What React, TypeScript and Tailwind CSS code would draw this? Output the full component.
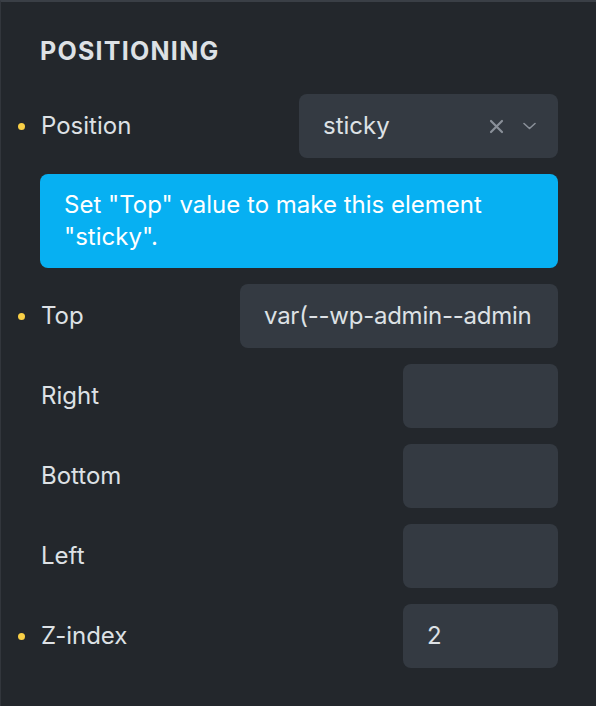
import React from "react";

const font = { fontFamily: "Inter, 'Noto Sans', sans-serif" };

function Dot({ on }: { on?: boolean }) {
  return (
    <span className="w-[20px] flex items-center">
      {on ? <span className="block w-[7px] h-[7px] rounded-full bg-[#f8cf46] -ml-[3px]" /> : null}
    </span>
  );
}

function Row({
  label,
  dot,
  children,
}: {
  label: string;
  dot?: boolean;
  children: React.ReactNode;
}) {
  return (
    <div className="flex items-center h-[64px] pl-[20px]">
      <Dot on={dot} />
      <span className="text-[24px] text-[#dde1e5] flex-1">{label}</span>
      {children}
    </div>
  );
}

function Box({ w, value }: { w: string; value?: string }) {
  return (
    <div
      className={`${w} h-[64px] rounded-[8px] bg-[#343a42] flex items-center pl-[24px] pr-[18px] text-[24px] tracking-[-0.01em] text-[#dde1e5] overflow-hidden`}
    >
      <span className="block whitespace-nowrap">{value}</span>
    </div>
  );
}

export default function App() {
  return (
    <div
      style={font}
      className="w-[596px] h-[706px] bg-[#23272c] border-t-[2px] border-t-[#3a3f46] border-l border-l-[#32363c] pr-[38px] pt-[34px]"
    >
      <h2 className="pl-[39px] text-[25px] font-bold tracking-[0.05em] text-[#dde1e5] leading-[30px]">
        POSITIONING
      </h2>
      <div className="mt-[28px] flex flex-col gap-[16px]">
        <Row label="Position" dot>
          <div className="w-[259px] h-[64px] rounded-[8px] bg-[#343a42] flex items-center pl-[24px] pr-[22px] text-[24px] text-[#dde1e5]">
            <span className="flex-1">sticky</span>
            <svg width="15" height="15" viewBox="0 0 15 15" className="mr-[19px]">
              <path d="M2 2L13 13M13 2L2 13" stroke="#8a9099" strokeWidth="2.2" strokeLinecap="round" />
            </svg>
            <svg width="13" height="8" viewBox="0 0 13 8">
              <path d="M1 1.5L6.5 6.5L12 1.5" stroke="#8a9099" strokeWidth="1.6" fill="none" strokeLinecap="round" strokeLinejoin="round" />
            </svg>
          </div>
        </Row>
        <div className="ml-[39px] rounded-[8px] bg-[#07b0f2] text-white text-[24px] leading-[32px] px-[24px] pt-[15px] pb-[15px]">
          Set "Top" value to make this element "sticky".
        </div>
        <Row label="Top" dot>
          <Box w="w-[318px]" value="var(--wp-admin--admin" />
        </Row>
        <Row label="Right">
          <Box w="w-[155px]" />
        </Row>
        <Row label="Bottom">
          <Box w="w-[155px]" />
        </Row>
        <Row label="Left">
          <Box w="w-[155px]" />
        </Row>
        <Row label="Z-index" dot>
          <Box w="w-[155px]" value="2" />
        </Row>
      </div>
    </div>
  );
}
